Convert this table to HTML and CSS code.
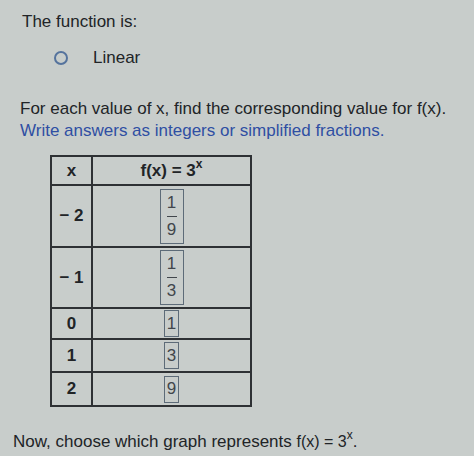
FILE: index.html
```html
<!DOCTYPE html>
<html>
<head>
<meta charset="utf-8">
<link rel="stylesheet" href="styles.css">
</head>
<body>
<div class="page">
  <p class="question">The function is:</p>
  <div class="option">
    <span class="radio"></span>
    <span class="option-label">Linear</span>
  </div>
  <div class="instructions">
    <p class="line">For each value of x, find the corresponding value for f(x).</p>
    <p class="line hint">Write answers as integers or simplified fractions.</p>
  </div>
  <table class="values">
    <tr class="head">
      <th class="col-x">x</th>
      <th class="col-f">f(x) = 3<sup>x</sup></th>
    </tr>
    <tr class="tall">
      <td class="col-x">− 2</td>
      <td class="col-f"><span class="box frac"><span class="num">1</span><span class="den">9</span></span></td>
    </tr>
    <tr class="tall2">
      <td class="col-x">− 1</td>
      <td class="col-f"><span class="box frac"><span class="num">1</span><span class="den">3</span></span></td>
    </tr>
    <tr class="short">
      <td class="col-x">0</td>
      <td class="col-f"><span class="box">1</span></td>
    </tr>
    <tr class="short2">
      <td class="col-x">1</td>
      <td class="col-f"><span class="box">3</span></td>
    </tr>
    <tr class="short3">
      <td class="col-x">2</td>
      <td class="col-f"><span class="box">9</span></td>
    </tr>
  </table>
  <p class="closing">Now, choose which graph represents <span class="math">f(x) = 3<sup>x</sup></span>.</p>
</div>
</body>
</html>
```
FILE: styles.css
```css
html, body {
  margin: 0;
  padding: 0;
}
body {
  background: #c8cdcb;
  font-family: "Liberation Sans", Arial, sans-serif;
  font-size: 17px;
  color: #212427;
  width: 474px;
  height: 456px;
  overflow: hidden;
}
.page {
  padding: 12px 0 0 0;
}
p {
  margin: 0;
}
.question {
  margin-left: 22px;
  line-height: 20px;
}
.option {
  display: flex;
  align-items: center;
  height: 20px;
  margin-top: 16px;
  margin-left: 54px;
  gap: 25px;
}
.radio {
  width: 10px;
  height: 10px;
  border: 2px solid #55739d;
  border-radius: 50%;
}
.option-label {
  font-size: 17px;
}
.instructions {
  margin-top: 30px;
  margin-left: 20px;
}
.line {
  line-height: 22px;
}
.hint {
  color: #2f4fa3;
}
.values {
  margin-top: 13px;
  margin-left: 50px;
  border-collapse: collapse;
  width: 202px;
}
.values th, .values td {
  border: 2px solid #2e3134;
  padding: 0;
  text-align: center;
  vertical-align: middle;
  font-weight: bold;
  font-size: 17px;
}
.values .col-x {
  width: 39px;
}
.head { height: 29px; }
.tall { height: 62px; }
.tall2 { height: 61px; }
.short { height: 31px; }
.short2 { height: 33px; }
.short3 { height: 34px; }
sup {
  font-size: 12px;
  vertical-align: 8px;
  line-height: 0;
}
.box {
  display: inline-flex;
  align-items: center;
  justify-content: center;
  border: 1px solid #5d6b78;
  width: 13px;
  height: 25px;
  font-weight: normal;
  color: #41464c;
  font-size: 17px;
  vertical-align: middle;
}
.box.frac {
  flex-direction: column;
  width: 22px;
  height: 53px;
}
.num, .den {
  display: block;
  line-height: 20px;
  width: 10px;
  text-align: center;
}
.num {
  border-bottom: 1px solid #41464c;
  padding-bottom: 3px;
}
.den {
  padding-top: 3px;
}
.closing {
  margin-top: 25px;
  margin-left: 13px;
  line-height: 20px;
}
.math {
  font-size: 16px;
}
```
